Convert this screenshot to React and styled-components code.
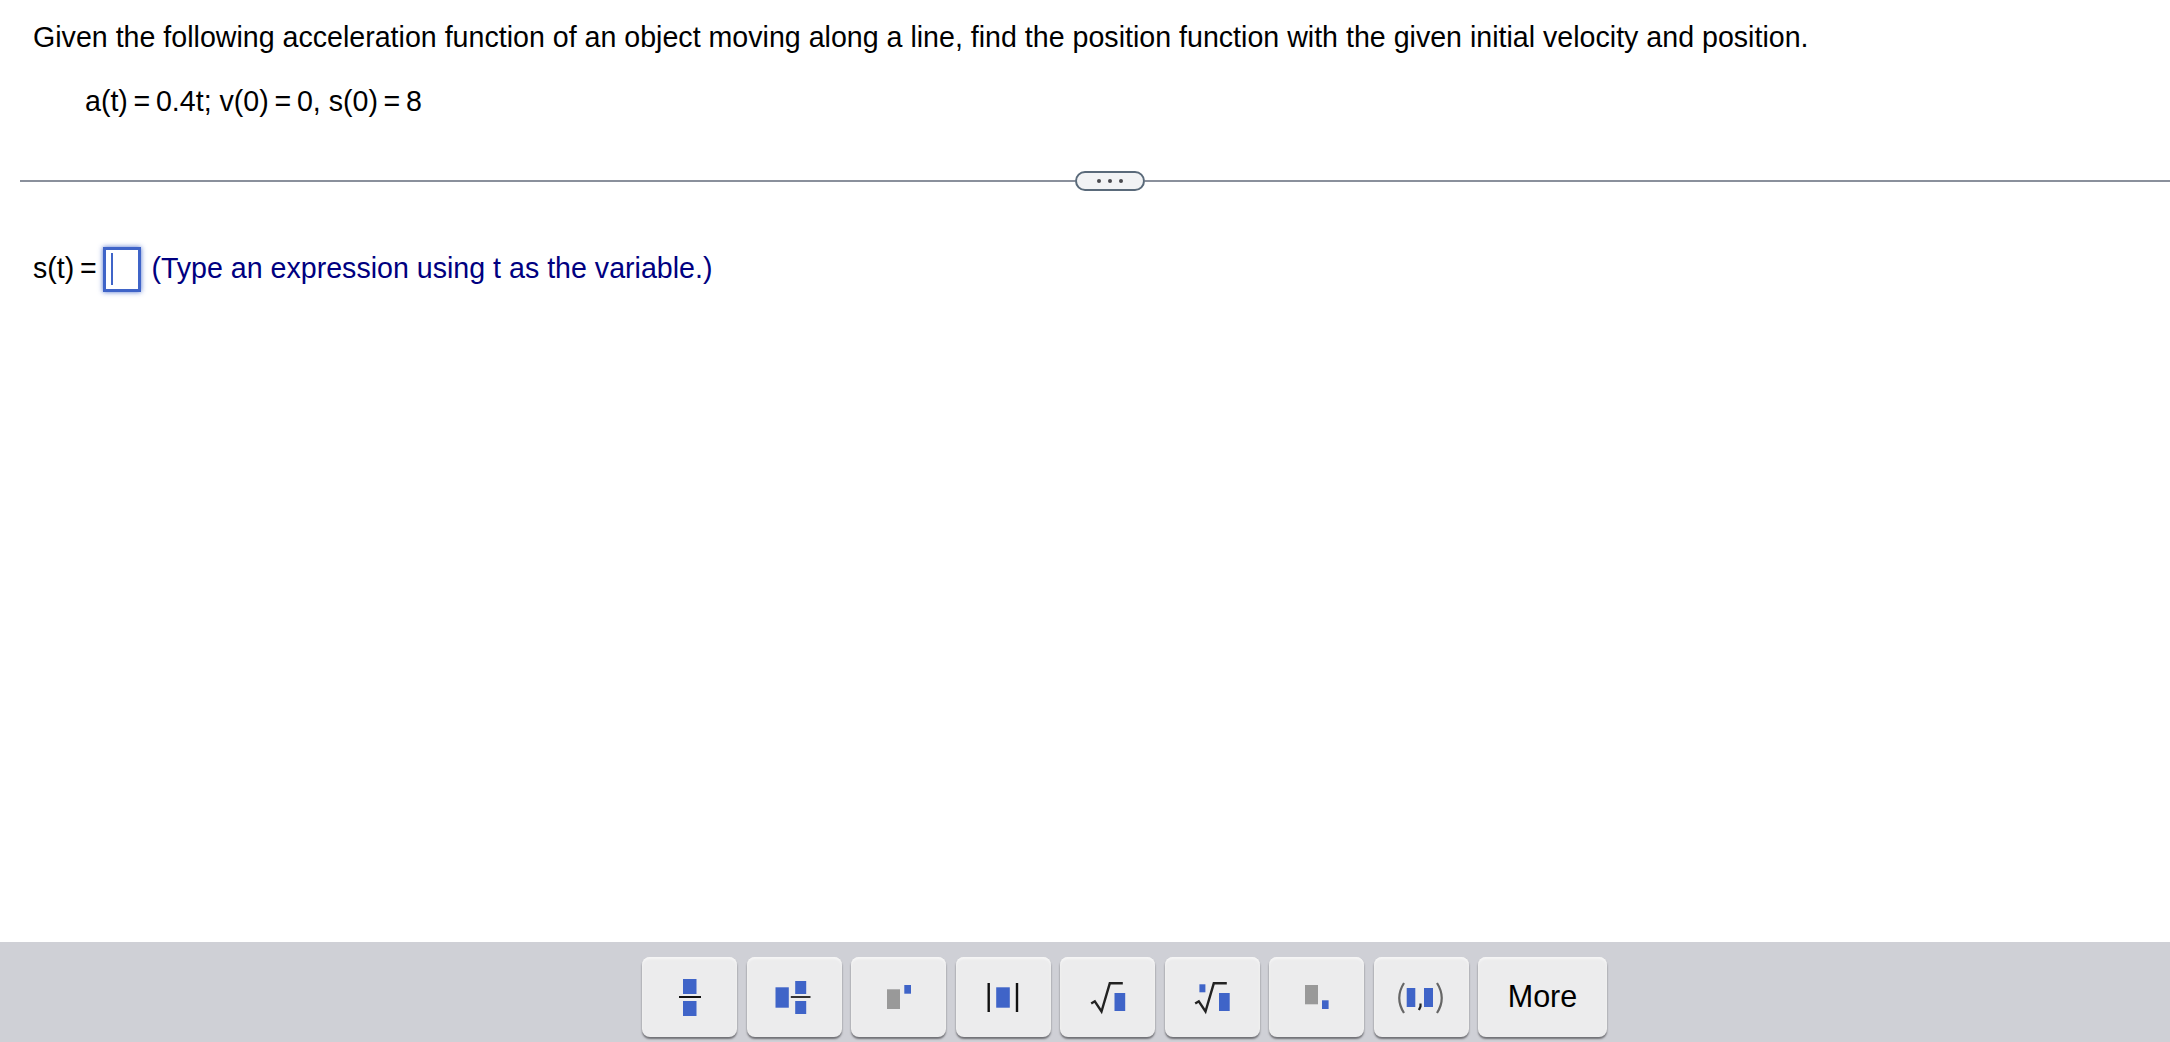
import React from "react";
import styled, { createGlobalStyle } from "styled-components";

const GlobalStyle = createGlobalStyle`
  html, body {
    margin: 0;
    padding: 0;
    background: #fff;
    font-family: "Liberation Sans", Arial, sans-serif;
  }
`;

const BLUE = "#3f64c8";
const GRAY = "#999999";

const Radical = () => (
  <path d="M13.2 36.5l3.6-2.2 6.7 10.2 8.3-28.2h13" fill="none" stroke="#222" strokeWidth="2.4" />
);

const FractionIcon = () => (
  <Icon>
    <rect x="23" y="12" width="13.5" height="15" fill={BLUE} />
    <rect x="19" y="29" width="22" height="2" fill="#111" />
    <rect x="23" y="34" width="13.5" height="15" fill={BLUE} />
  </Icon>
);

const MixedIcon = () => (
  <Icon>
    <rect x="11.5" y="20.3" width="13.3" height="20.4" fill={BLUE} />
    <rect x="31.2" y="14" width="11" height="13" fill={BLUE} />
    <rect x="26.8" y="29" width="19.7" height="2" fill="#333" />
    <rect x="31.2" y="34" width="11" height="13" fill={BLUE} />
  </Icon>
);

const ExponentIcon = () => (
  <Icon>
    <rect x="18" y="22.3" width="13" height="19.7" fill={GRAY} />
    <rect x="35.3" y="18" width="6.7" height="8.7" fill={BLUE} />
  </Icon>
);

const AbsIcon = () => (
  <Icon>
    <rect x="14.5" y="16" width="2.4" height="29" fill="#111" />
    <rect x="23.2" y="20.3" width="13.6" height="20.4" fill={BLUE} />
    <rect x="42.8" y="16" width="2.4" height="29" fill="#111" />
  </Icon>
);

const SqrtIcon = () => (
  <Icon>
    <Radical />
    <rect x="36.5" y="26" width="10.7" height="18" fill={BLUE} />
  </Icon>
);

const RootIcon = () => (
  <Icon>
    <rect x="17.4" y="17.3" width="6" height="8" fill={BLUE} />
    <Radical />
    <rect x="37" y="26" width="10.7" height="18" fill={BLUE} />
  </Icon>
);

const SubscriptIcon = () => (
  <Icon>
    <rect x="18" y="18" width="13" height="19.3" fill={GRAY} />
    <rect x="35" y="33.3" width="6.6" height="8.7" fill={BLUE} />
  </Icon>
);

const PointIcon = () => (
  <Icon>
    <path d="M13 16Q3.5 31 13 46" fill="none" stroke="#666" strokeWidth="2.2" />
    <rect x="15.7" y="21" width="8.6" height="19" fill={BLUE} />
    <path d="M29.5 36.5v3l-1.6 3.5" fill="none" stroke="#222" strokeWidth="2.2" />
    <rect x="33" y="21" width="9" height="19" fill={BLUE} />
    <path d="M46 16Q55.5 31 46 46" fill="none" stroke="#666" strokeWidth="2.2" />
  </Icon>
);

const tools = [
  FractionIcon,
  MixedIcon,
  ExponentIcon,
  AbsIcon,
  SqrtIcon,
  RootIcon,
  SubscriptIcon,
  PointIcon,
];

const App = () => {
  return (
    <Page>
      <GlobalStyle />
      <Question>
        Given the following acceleration function of an object moving along a line, find the
        position function with the given initial velocity and position.
      </Question>
      <Formula>
        a(t)<Eq>=</Eq>0.4t; v(0)<Eq>=</Eq>0, s(0)<Eq>=</Eq>8
      </Formula>
      <Divider>
        <Rule $left />
        <Pill>
          <Dot />
          <Dot />
          <Dot />
        </Pill>
        <Rule />
      </Divider>
      <AnswerRow>
        <span>
          s(t)<Eq>=</Eq>
        </span>
        <AnswerInput>
          <Caret />
        </AnswerInput>
        <Hint>(Type an expression using t as the variable.)</Hint>
      </AnswerRow>
      <Toolbar>
        {tools.map((ToolIcon, i) => (
          <ToolButton key={i}>
            <ToolIcon />
          </ToolButton>
        ))}
        <ToolButton $wide>More</ToolButton>
      </Toolbar>
    </Page>
  );
};

const Page = styled.div`
  display: flex;
  flex-direction: column;
  height: 1042px;
  overflow: hidden;
  color: #000;
  font-size: 28.6px;
  line-height: 36px;
`;

const Question = styled.div`
  padding: 19px 0 0 33px;
  white-space: nowrap;
`;

const Formula = styled.div`
  padding: 28px 0 0 85px;
  white-space: nowrap;
`;

const Eq = styled.span`
  margin: 0 5.7px;
`;

const Divider = styled.div`
  display: flex;
  align-items: center;
  height: 20px;
  margin: 52px 0 0 20px;
`;

const Rule = styled.div`
  flex: ${(props) => (props.$left ? "0 0 1055px" : "1")};
  height: 2px;
  background: #8a909c;
`;

const Pill = styled.div`
  display: flex;
  align-items: center;
  justify-content: center;
  gap: 7px;
  box-sizing: border-box;
  width: 70px;
  height: 20px;
  background: #f2f3f5;
  border: 2px solid #5a6a7a;
  border-radius: 10px;
`;

const Dot = styled.span`
  width: 4px;
  height: 4px;
  border-radius: 50%;
  background: #4a4a4f;
`;

const AnswerRow = styled.div`
  display: flex;
  align-items: center;
  height: 44px;
  margin-top: 55px;
  padding-left: 33px;
  white-space: nowrap;
`;

const AnswerInput = styled.div`
  box-sizing: border-box;
  width: 38px;
  height: 45px;
  margin: 3px 0 0 1px;
  padding: 3px 0 0 5px;
  background: #fff;
  border: 3px solid #3f64c8;
  box-shadow: 0 0 5px rgba(63, 100, 200, 0.9);
`;

const Caret = styled.div`
  width: 2px;
  height: 32px;
  background: #3f64c8;
`;

const Hint = styled.span`
  margin-left: 10px;
  color: #000080;
`;

const Toolbar = styled.div`
  display: flex;
  gap: 9.5px;
  box-sizing: border-box;
  height: 100px;
  margin-top: auto;
  padding: 15px 0 0 642px;
  background: #cfd0d6;
`;

const ToolButton = styled.div`
  display: flex;
  align-items: center;
  justify-content: center;
  box-sizing: border-box;
  width: ${(props) => (props.$wide ? "129px" : "95px")};
  height: 80px;
  padding-bottom: ${(props) => (props.$wide ? "2px" : "0")};
  background: #ececed;
  border-radius: 8px;
  box-shadow: 0 2px 2px #6f6f74, inset 0 2px 2px #f6f6f6;
  font-size: 30.5px;
`;

const Icon = styled.svg.attrs({ viewBox: "0 0 60 60" })`
  width: 60px;
  height: 60px;
`;

export default App;
